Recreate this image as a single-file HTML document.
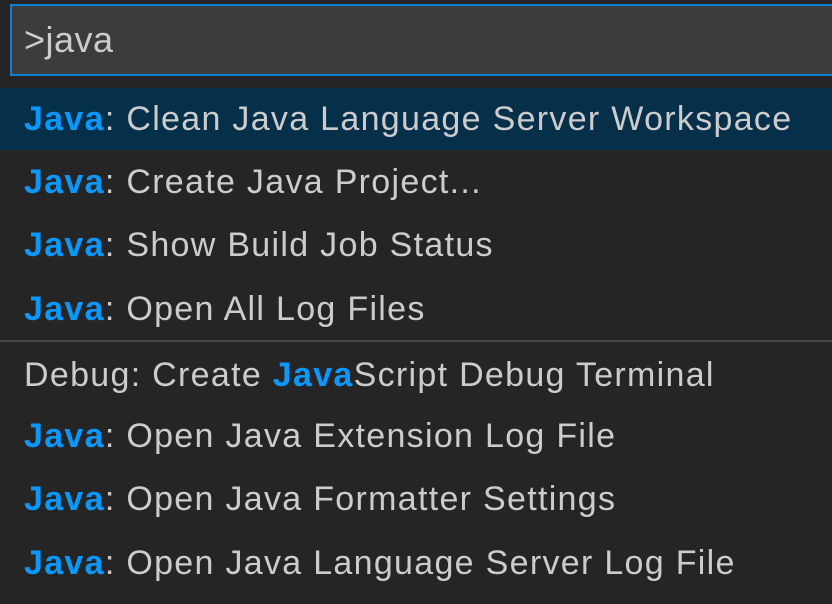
<!DOCTYPE html>
<html><head><style>
html,body{margin:0;padding:0;width:832px;height:604px;background:#252526;overflow:hidden;font-family:"Liberation Sans",sans-serif;color:#cccccc}
.box{position:absolute;left:10px;top:4px;width:830px;height:68px;border:2px solid #0e7fd4;border-right:none;background:#3c3c3c}
.box span{position:absolute;left:12px;top:13px;font-size:36px;color:#cccccc;letter-spacing:0.5px}
.row{position:absolute;left:0;width:832px;height:62px;line-height:62px;font-size:34px;letter-spacing:1.3px;padding-left:24px;box-sizing:border-box;white-space:nowrap}
.sel{background:#062f4a}
b{color:#0a98fb}
.sep{position:absolute;left:0;top:340px;width:832px;height:2px;background:#454545}
</style></head><body>
<div class="box"><span>&gt;java</span></div>
<div class="row sel" style="top:88px"><b>Java</b>: Clean Java Language Server Workspace</div>
<div class="row" style="top:151px"><b>Java</b>: Create Java Project...</div>
<div class="row" style="top:214px"><b>Java</b>: Show Build Job Status</div>
<div class="row" style="top:278px"><b>Java</b>: Open All Log Files</div>
<div class="sep"></div>
<div class="row" style="top:344px">Debug: Create <b>Java</b>Script Debug Terminal</div>
<div class="row" style="top:405px"><b>Java</b>: Open Java Extension Log File</div>
<div class="row" style="top:468px"><b>Java</b>: Open Java Formatter Settings</div>
<div class="row" style="top:532px"><b>Java</b>: Open Java Language Server Log File</div>
</body></html>
